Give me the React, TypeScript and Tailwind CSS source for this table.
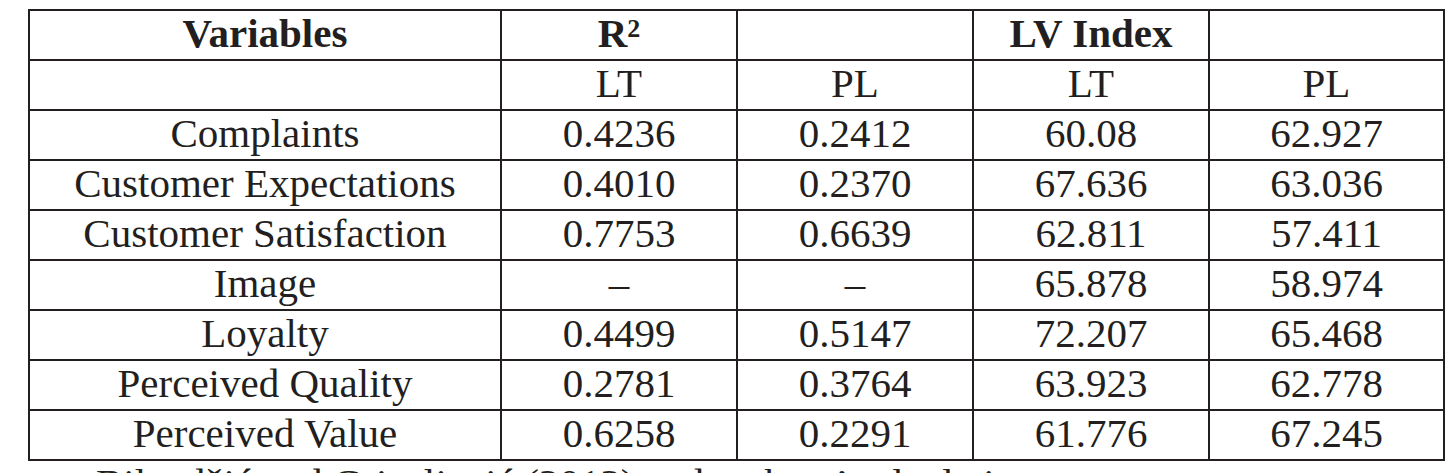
import React from "react";

const rows: string[][] = [
  ["Complaints", "0.4236", "0.2412", "60.08", "62.927"],
  ["Customer Expectations", "0.4010", "0.2370", "67.636", "63.036"],
  ["Customer Satisfaction", "0.7753", "0.6639", "62.811", "57.411"],
  ["Image", "–", "–", "65.878", "58.974"],
  ["Loyalty", "0.4499", "0.5147", "72.207", "65.468"],
  ["Perceived Quality", "0.2781", "0.3764", "63.923", "62.778"],
  ["Perceived Value", "0.6258", "0.2291", "61.776", "67.245"],
];

function Cell({ children, bold }: { children?: React.ReactNode; bold?: boolean }) {
  return (
    <div
      className={`bg-white h-[48px] flex items-center justify-center pb-[4px] leading-none whitespace-nowrap ${
        bold ? "font-bold" : ""
      }`}
    >
      {children}
    </div>
  );
}

export default function App() {
  return (
    <div className="w-[1447px] h-[473px] bg-white overflow-hidden text-[#231f20] text-[41px] font-['Liberation_Serif','Times_New_Roman',serif]">
      <div className="ml-[28px] mt-[9px] w-[1417px] border-2 border-[#231f20] bg-[#231f20] grid grid-cols-[470px_234px_234px_234px_233px] gap-[2px]">
        <Cell bold>Variables</Cell>
        <Cell bold>
          R<sup className="text-[26px] relative -top-[4px]">2</sup>
        </Cell>
        <Cell />
        <Cell bold>LV Index</Cell>
        <Cell />
        <Cell />
        <Cell>LT</Cell>
        <Cell>PL</Cell>
        <Cell>LT</Cell>
        <Cell>PL</Cell>
        {rows.map((r) => r.map((c, i) => <Cell key={r[0] + i}>{c}</Cell>))}
      </div>
      <div className="pl-[96px] pt-[2px] leading-none whitespace-nowrap">
        Bilandžić and Grizeljević (2013) and authors’ calculation
      </div>
    </div>
  );
}
